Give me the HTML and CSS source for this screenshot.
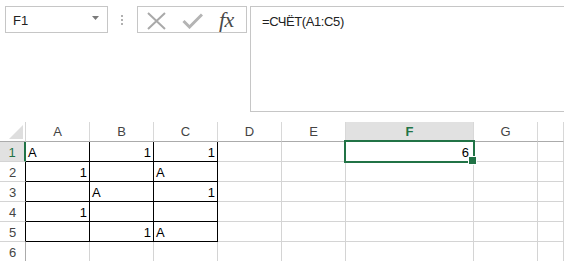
FILE: index.html
```html
<!DOCTYPE html>
<html>
<head>
<meta charset="utf-8">
<link rel="stylesheet" href="styles.css">
</head>
<body>
<div class="toolbar">
  <div class="namebox">
    <span class="name">F1</span>
    <svg class="arrow" width="7" height="4" viewBox="0 0 7 4"><polygon points="0,0 7,0 3.5,4" fill="#7a7a7a"/></svg>
  </div>
  <div class="dots"><i></i><i></i><i></i></div>
  <div class="btns">
    <svg class="xicon" width="19" height="18" viewBox="0 0 19 18"><path d="M1 1 L18 17 M18 1 L1 17" stroke="#a9a9a9" stroke-width="2" fill="none"/></svg>
    <svg class="check" width="21" height="16" viewBox="0 0 21 16"><path d="M1.5 8 L7.5 14 L20 1.5" stroke="#b4b4b4" stroke-width="3" fill="none"/></svg>
    <span class="fx">fx</span>
  </div>
  <div class="formula">=СЧЁТ(A1:C5)</div>
</div>

<div class="sheet">
  <div class="corner"><svg width="25" height="19" viewBox="0 0 25 19"><polygon points="23,3 23,17 9,17" fill="#dedede"/></svg></div>
  <div class="ch">A</div><div class="ch">B</div><div class="ch">C</div><div class="ch">D</div><div class="ch">E</div><div class="ch chsel">F</div><div class="ch">G</div><div class="ch"></div>

  <div class="rh rhsel">1</div>
  <div class="c b">A</div><div class="c b n">1</div><div class="c b n">1</div><div class="c"></div><div class="c"></div><div class="c n sel">6</div><div class="c"></div><div class="c"></div>

  <div class="rh bl">2</div>
  <div class="c b n">1</div><div class="c b"></div><div class="c b">A</div><div class="c"></div><div class="c"></div><div class="c"></div><div class="c"></div><div class="c"></div>

  <div class="rh bl">3</div>
  <div class="c b"></div><div class="c b">A</div><div class="c b n">1</div><div class="c"></div><div class="c"></div><div class="c"></div><div class="c"></div><div class="c"></div>

  <div class="rh bl">4</div>
  <div class="c b n">1</div><div class="c b"></div><div class="c b"></div><div class="c"></div><div class="c"></div><div class="c"></div><div class="c"></div><div class="c"></div>

  <div class="rh bl">5</div>
  <div class="c b"></div><div class="c b n">1</div><div class="c b">A</div><div class="c"></div><div class="c"></div><div class="c"></div><div class="c"></div><div class="c"></div>

  <div class="rh">6</div>
  <div class="c"></div><div class="c"></div><div class="c"></div><div class="c"></div><div class="c"></div><div class="c"></div><div class="c"></div><div class="c"></div>
</div>
</body>
</html>
```
FILE: styles.css
```css
* { box-sizing: border-box; }
html, body { margin: 0; padding: 0; background: #fff; overflow: hidden; }
body {
  font-family: "Liberation Sans", Arial, sans-serif;
  font-size: 13px;
  color: #000;
  width: 564px;
  height: 261px;
}

.toolbar {
  display: flex;
  align-items: flex-start;
  height: 112px;
  padding-top: 6px;
}

.namebox {
  margin-left: 5px;
  width: 103px;
  height: 27px;
  border: 1px solid #c6c6c6;
  display: flex;
  align-items: center;
  padding-left: 7px;
}
.name { flex: 1; line-height: 17px; padding-top: 1px; color: #222; }
.arrow { margin-right: 8px; margin-top: -3px; }

.dots {
  margin-left: 13px;
  margin-top: 9px;
  display: flex;
  flex-direction: column;
  gap: 2px;
}
.dots i { display: block; width: 2px; height: 2px; background: #b0b0b0; }

.btns {
  margin-left: 14px;
  width: 110px;
  height: 27px;
  border: 1px solid #c6c6c6;
  display: flex;
  align-items: center;
}
.xicon { margin-left: 9px; margin-top: 2px; }
.check { margin-left: 16px; margin-top: 3px; }
.fx {
  margin-left: 16px;
  font-family: "Liberation Serif", "Times New Roman", serif;
  font-style: italic;
  font-size: 22px;
  line-height: 22px;
  color: #4a4a4a;
  letter-spacing: -0.5px;
}

.formula {
  margin-left: 3px;
  flex: 1;
  height: 106px;
  border: 1px solid #c6c6c6;
  border-right: none;
  padding: 6px 0 0 11px;
  line-height: 17px;
  letter-spacing: -0.4px;
  color: #222;
}

.sheet {
  margin-top: 10px;
  display: grid;
  grid-template-columns: 26px 64px 64px 64px 64px 64px 128px 64px 1fr;
  grid-auto-rows: 20px;
}

.corner {
  border-right: 1px solid #d4d4d4;
  border-bottom: 1px solid #ababab;
}
.corner svg { display: block; }

.ch {
  border-right: 1px solid #d8d8d8;
  border-bottom: 1px solid #ababab;
  text-align: center;
  line-height: 19px;
  color: #444;
}
.chsel {
  background: #e1e1e1;
  color: #217346;
  font-weight: bold;
}

.rh {
  border-right: 1px solid #ababab;
  border-bottom: 1px solid #d4d4d4;
  text-align: center;
  padding-top: 2px;
  line-height: 17px;
  color: #444;
}
.rh.bl { border-right-color: #000; }
.rhsel {
  background: #e1e1e1;
  color: #217346;
  border-right: 2px solid #217346;
}

.c {
  border-right: 1px solid #d4d4d4;
  border-bottom: 1px solid #d4d4d4;
  padding: 2px 2px 0 2px;
  line-height: 17px;
  white-space: nowrap;
}
.c.n { text-align: right; }
.c.b { border-right-color: #000; border-bottom-color: #000; }

.sel { position: relative; padding-right: 4px; }
.sel::after {
  content: "";
  position: absolute;
  top: -2px;
  left: -2px;
  right: -2px;
  bottom: -2px;
  border: 2px solid #217346;
}
.sel::before {
  content: "";
  position: absolute;
  right: -4px;
  bottom: -4px;
  width: 7px;
  height: 7px;
  background: #217346;
  border: 1px solid #fff;
  z-index: 1;
}
```
